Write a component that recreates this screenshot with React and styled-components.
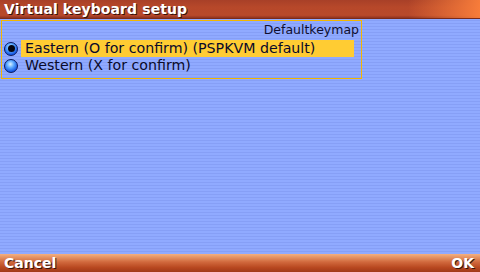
import React from "react";
import styled, { createGlobalStyle } from "styled-components";

const Global = createGlobalStyle`
  html, body { margin: 0; padding: 0; }
  body { width: 480px; height: 272px; overflow: hidden; font-family: "DejaVu Sans", sans-serif; }
  #root { width: 480px; height: 272px; }
`;

const Screen = styled.div`
  width: 480px;
  height: 272px;
  display: flex;
  flex-direction: column;
  background: repeating-linear-gradient(
    to bottom,
    #90aaff 0px,
    #90aaff 2px,
    #869ff6 2px,
    #869ff6 3px
  );
`;

const TitleBar = styled.div`
  height: 19px;
  flex: none;
  box-sizing: border-box;
  display: flex;
  align-items: center;
  padding-left: 4px;
  background:
    linear-gradient(to right, rgba(255,140,70,0) 85%, rgba(255,130,60,0.9) 100%),
    linear-gradient(to bottom, #a84028 0%, #b7482a 40%, #b8492b 85%, #8e3220 100%);
  border-bottom: 1px solid #7a2a1a;
`;

const TitleText = styled.span`
  color: #fff;
  font-weight: bold;
  font-size: 14px;
  line-height: 18px;
  text-shadow: 1px 1px 0 #3a1008;
  letter-spacing: 0.1px;
`;

const Content = styled.div`
  flex: 1;
  padding: 1px 0 0 1px;
`;

const Frame = styled.div`
  width: 361px;
  box-sizing: border-box;
  border: 1px solid #f2b600;
  padding: 1px 7px 4px 1px;
  display: flex;
  flex-direction: column;
`;

const Legend = styled.div`
  align-self: flex-end;
  font-size: 12.5px;
  line-height: 15px;
  color: #101030;
  margin-right: -5px;
  margin-bottom: 3px;
`;

const Option = styled.div`
  display: flex;
  align-items: center;
  height: 17px;
`;

const Radio = styled.span`
  width: 14px;
  height: 14px;
  border-radius: 50%;
  flex: none;
  margin: 0 3px 0 1px;
  box-sizing: border-box;
  border: 1px solid #0a1a60;
  background: radial-gradient(circle at 45% 35%, #d8f0ff 0%, #5aa8ff 35%, #1050e0 75%, #0830a0 100%);
  display: flex;
  align-items: center;
  justify-content: center;
  &::after {
    content: "";
    display: ${(p) => (p.$checked ? "block" : "none")};
    width: 7px;
    height: 7px;
    border-radius: 50%;
    background: #050510;
  }
`;

const Label = styled.span`
  flex: 1;
  height: 17px;
  font-size: 14.2px;
  line-height: 17px;
  color: #0a0a2a;
  padding-left: 4px;
  background: ${(p) => (p.$selected ? "#ffcc33" : "transparent")};
  white-space: nowrap;
`;

const BottomBar = styled.div`
  height: 18px;
  flex: none;
  display: flex;
  justify-content: space-between;
  align-items: center;
  padding: 0 6px 0 4px;
  background: linear-gradient(
    to bottom,
    #f4b080 0%,
    #e89868 15%,
    #d0683c 45%,
    #b84820 75%,
    #a03818 100%
  );
`;

const SoftKey = styled.span`
  color: #fff;
  font-weight: bold;
  font-size: 14px;
  line-height: 18px;
  text-shadow: 1px 1px 0 #3a1008;
`;

export default function App() {
  return (
    <>
      <Global />
      <Screen>
        <TitleBar>
          <TitleText>Virtual keyboard setup</TitleText>
        </TitleBar>
        <Content>
          <Frame>
            <Legend>Defaultkeymap</Legend>
            <Option>
              <Radio $checked />
              <Label $selected>Eastern (O for confirm) (PSPKVM default)</Label>
            </Option>
            <Option>
              <Radio />
              <Label>Western (X for confirm)</Label>
            </Option>
          </Frame>
        </Content>
        <BottomBar>
          <SoftKey>Cancel</SoftKey>
          <SoftKey>OK</SoftKey>
        </BottomBar>
      </Screen>
    </>
  );
}
